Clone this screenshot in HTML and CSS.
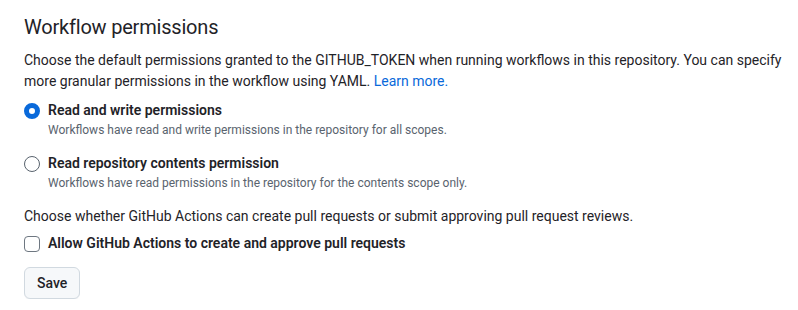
FILE: index.html
```html
<!DOCTYPE html>
<html lang="en">
<head>
<meta charset="utf-8">
<title>Workflow permissions</title>
<link rel="stylesheet" href="styles.css">
</head>
<body>
<form class="settings">
  <h2 class="heading">Workflow permissions</h2>
  <p class="intro">Choose the default permissions granted to the GITHUB_TOKEN when running workflows in this repository. You can specify more granular permissions in the workflow using YAML. <a class="link" href="#">Learn more.</a></p>

  <div class="option option-first">
    <label class="choice">
      <input class="radio" type="radio" name="perm" checked>
      <span class="choice-label">Read and write permissions</span>
    </label>
    <p class="note">Workflows have read and write permissions in the repository for all scopes.</p>
  </div>

  <div class="option option-second">
    <label class="choice">
      <input class="radio" type="radio" name="perm">
      <span class="choice-label">Read repository contents permission</span>
    </label>
    <p class="note">Workflows have read permissions in the repository for the contents scope only.</p>
  </div>

  <p class="intro intro-second">Choose whether GitHub Actions can create pull requests or submit approving pull request reviews.</p>

  <label class="choice choice-check">
    <input class="checkbox" type="checkbox">
    <span class="choice-label">Allow GitHub Actions to create and approve pull requests</span>
  </label>

  <div class="actions">
    <button class="btn" type="button">Save</button>
  </div>
</form>
</body>
</html>
```
FILE: styles.css
```css
html, body {
  margin: 0;
  padding: 0;
  background: #ffffff;
}

body {
  font-family: Roboto, "Liberation Sans", Arial, sans-serif;
  color: #1f2328;
  font-size: 14px;
  line-height: 21px;
}

.settings {
  padding: 12px 12px 0 24px;
}

.heading {
  margin: 0;
  font-size: 20px;
  line-height: 30px;
  font-weight: 400;
  letter-spacing: -0.2px;
  color: #1f2328;
}

.intro {
  margin: 8px 0 0;
  font-size: 14px;
  line-height: 21px;
}

.intro-second {
  margin-top: 14px;
}

.link {
  color: #0969da;
  text-decoration: none;
}

.option-first {
  margin-top: 8px;
}

.option-second {
  margin-top: 14px;
}

.choice {
  display: flex;
  align-items: center;
  gap: 8px;
  height: 21px;
}

.choice-check {
  margin-top: 6px;
}

.choice-label {
  font-weight: 600;
  font-size: 14px;
  line-height: 21px;
  color: #1f2328;
}

.note {
  margin: 0 0 0 24px;
  font-size: 12px;
  line-height: 18px;
  color: #59636e;
}

.radio,
.checkbox {
  appearance: none;
  -webkit-appearance: none;
  margin: 0;
  width: 16px;
  height: 16px;
  flex: 0 0 16px;
  background: #ffffff;
  border: 1px solid #59636e;
  box-sizing: border-box;
}

.radio {
  border-radius: 50%;
}

.radio:checked {
  border: 5px solid #0969da;
}

.checkbox {
  border-radius: 4px;
  border-color: #6e7781;
}

.actions {
  margin-top: 13px;
}

.btn {
  height: 32px;
  padding: 0 12px;
  font-family: inherit;
  font-size: 14px;
  font-weight: 500;
  color: #1f2328;
  background: #f6f8fa;
  border: 1px solid #d1d9e0;
  border-radius: 6px;
  box-shadow: 0 1px 0 rgba(31, 35, 40, 0.04);
  cursor: pointer;
}
```
